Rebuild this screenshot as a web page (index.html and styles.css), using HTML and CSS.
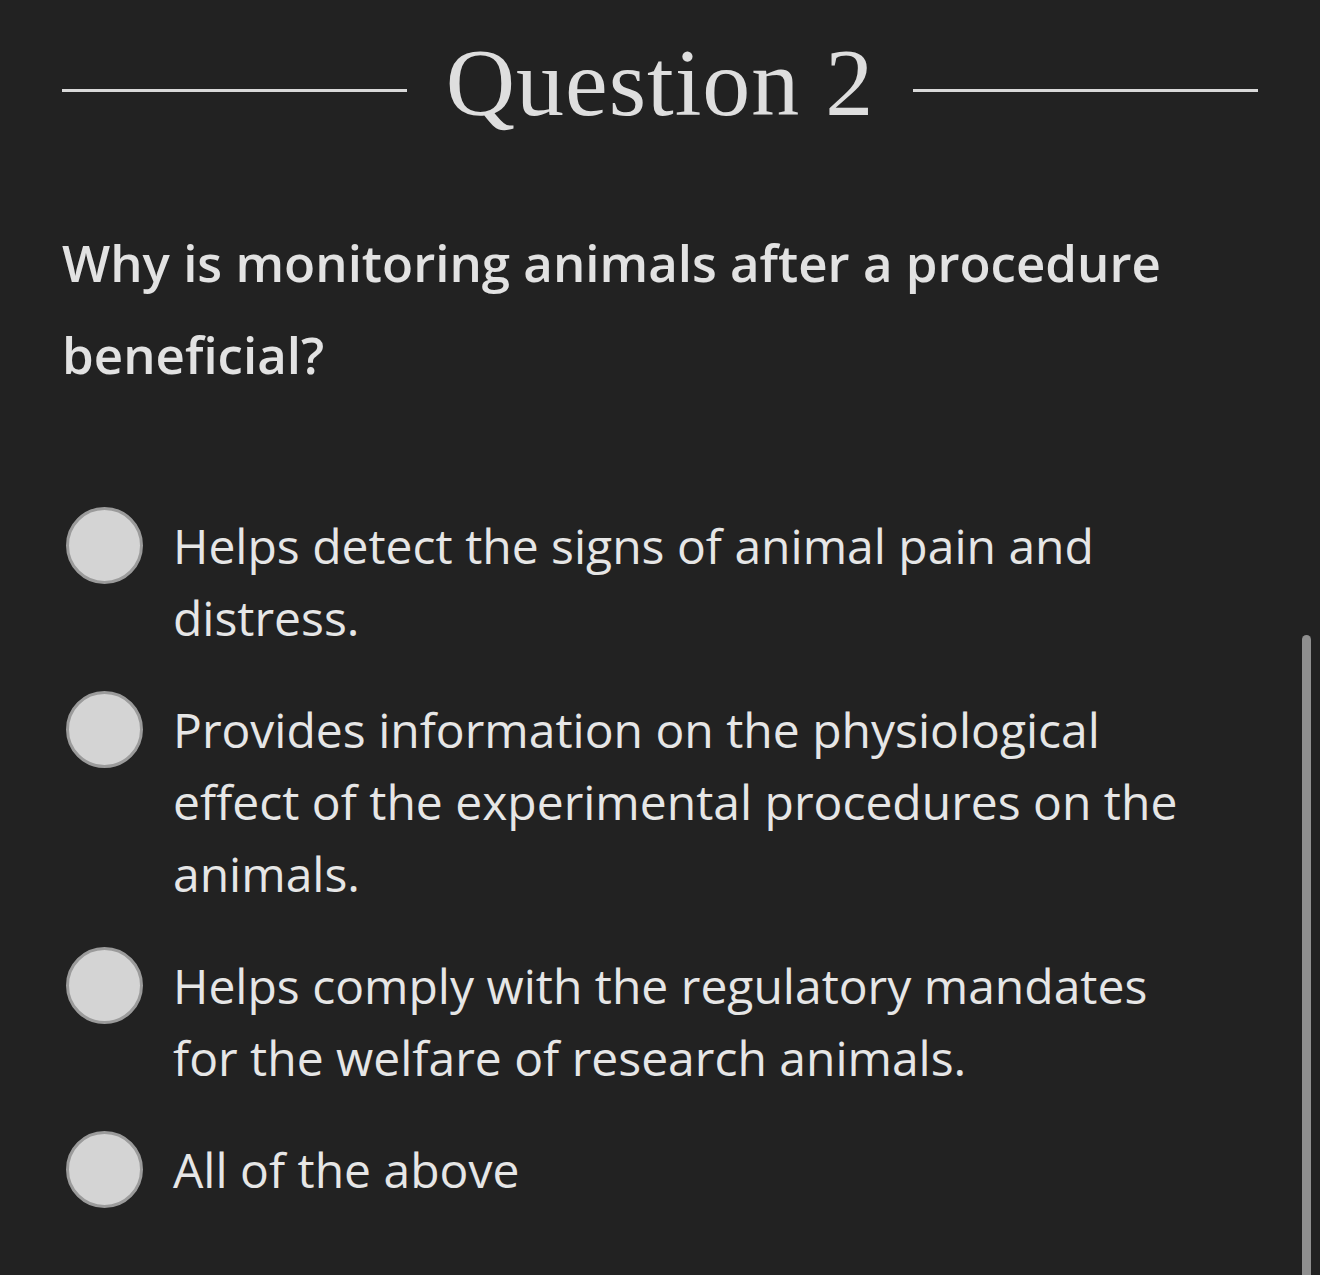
FILE: index.html
```html
<!DOCTYPE html>
<html lang="en">
<head>
<meta charset="utf-8">
<title>Question 2</title>
<link rel="stylesheet" href="styles.css">
</head>
<body>
<main class="quiz">
  <header class="q-head">
    <span class="q-rule"></span>
    <h1 class="q-title">Question 2</h1>
    <span class="q-rule"></span>
  </header>
  <p class="q-text">Why is monitoring animals after a procedure beneficial?</p>
  <ul class="options">
    <li class="option"><span class="radio"></span><span class="opt-text">Helps detect the signs of animal pain and distress.</span></li>
    <li class="option"><span class="radio"></span><span class="opt-text">Provides information on the physiological effect of the experimental procedures on the animals.</span></li>
    <li class="option"><span class="radio"></span><span class="opt-text">Helps comply with the regulatory mandates for the welfare of research animals.</span></li>
    <li class="option"><span class="radio"></span><span class="opt-text">All of the above</span></li>
  </ul>
</main>
<div class="scrollbar"></div>
</body>
</html>
```

FILE: styles.css
```css
html, body {
  margin: 0;
  padding: 0;
  background: #222222;
  height: 100%;
  overflow: hidden;
}

.quiz {
  padding: 33px 62px 0 62px;
  font-family: "Open Sans", "Liberation Sans", sans-serif;
}

.q-head {
  display: flex;
  align-items: center;
  gap: 39px;
}

.q-rule {
  flex: 1;
  height: 3px;
  background: #d9d9d9;
  margin-top: 14px;
}

.q-title {
  margin: 0;
  font-family: "Liberation Serif", "DejaVu Serif", serif;
  font-weight: 400;
  font-size: 96px;
  line-height: 100px;
  letter-spacing: 1px;
  color: #dedede;
}

.q-text {
  margin: 83px 0 0 0;
  font-size: 51px;
  font-weight: 600;
  line-height: 92px;
  color: #e2e2e2;
}

.options {
  list-style: none;
  margin: 110px 0 0 0;
  padding: 0;
  display: flex;
  flex-direction: column;
  gap: 40px;
}

.option {
  display: flex;
  align-items: flex-start;
  gap: 30px;
  padding-left: 4px;
}

.radio {
  flex: none;
  width: 71px;
  height: 71px;
  border-radius: 50%;
  background: #d4d4d4;
  border: 3px solid #9b9b9b;
  margin-top: -3px;
}

.opt-text {
  font-size: 48px;
  line-height: 72px;
  color: #e6e6e6;
  max-width: 1030px;
}

.scrollbar {
  position: fixed;
  left: 1302px;
  top: 635px;
  width: 9px;
  bottom: 0;
  background: #8f8f8f;
  border-radius: 5px 5px 0 0;
}
```
